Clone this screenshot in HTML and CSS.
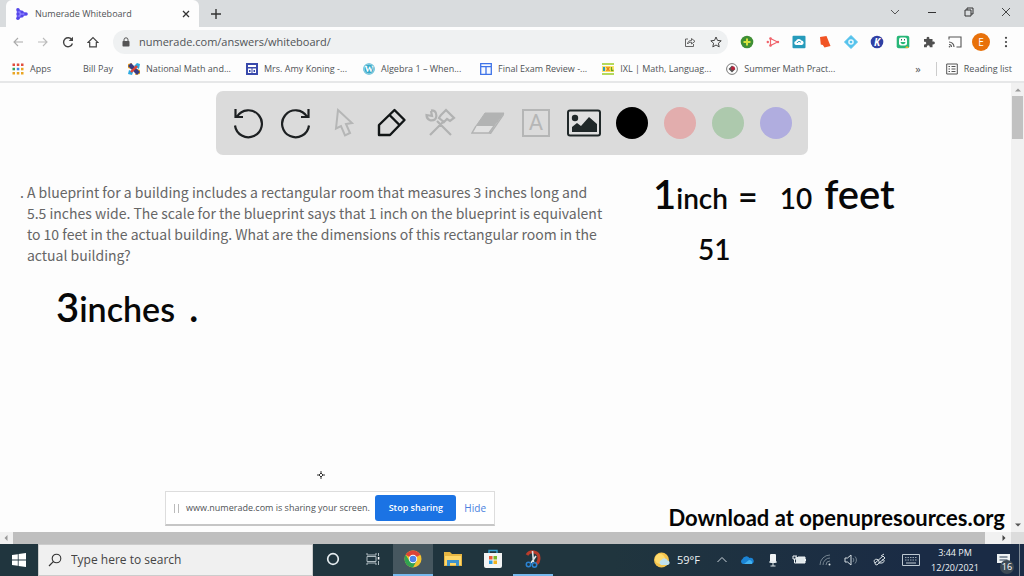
FILE: index.html
```
<!DOCTYPE html>
<html lang="en">
<head>
<meta charset="utf-8">
<meta name="viewport" content="width=device-width, initial-scale=1">
<title>Numerade Whiteboard</title>
<link rel="stylesheet" href="styles.css">
</head>
<body>
<header class="browser">
  <div class="tabstrip">
    <div class="tab">
      <svg class="i12" viewBox="0 0 12 12"><path d="M1.500 1.500L10.500 6L1.500 10.500Z" fill="#8d83ff" stroke="#6a5cf5" stroke-width="1.500"/><g fill="#5546e8"><circle cx="2" cy="1.800" r="1.700"/><circle cx="2" cy="6" r="1.600"/><circle cx="2" cy="10.200" r="1.700"/><circle cx="6" cy="4" r="1.500"/><circle cx="6" cy="8" r="1.500"/><circle cx="10" cy="6" r="1.700"/></g></svg>
      <span class="tab-title">Numerade Whiteboard</span>
      <button class="plain" aria-label="Close tab"><svg class="i8" viewBox="0 0 8 8"><path d="M1 1L7 7M7 1L1 7" stroke="#333" stroke-width="1.300"/></svg></button>
    </div>
    <button class="plain newtab" aria-label="New tab"><svg class="i12" viewBox="0 0 12 12"><path d="M6 1V11M1 6H11" stroke="#333" stroke-width="1.400"/></svg></button>
    <div class="window-controls">
      <button class="plain" aria-label="Search tabs"><svg class="i12" viewBox="0 0 12 12"><path d="M2 4L6 8L10 4" fill="none" stroke="#555"/></svg></button>
      <button class="plain" aria-label="Minimize"><svg class="i12" viewBox="0 0 12 12"><path d="M2 6.500H10" stroke="#333"/></svg></button>
      <button class="plain" aria-label="Restore"><svg class="i12" viewBox="0 0 12 12"><path d="M2 4H8V10H2ZM4 4V2H10V8H8" fill="none" stroke="#333"/></svg></button>
      <button class="plain" aria-label="Close"><svg class="i12" viewBox="0 0 12 12"><path d="M2 2L10 10M10 2L2 10" stroke="#333" stroke-width=".9"/></svg></button>
    </div>
  </div>
  <div class="toolbar">
    <nav class="nav">
      <button class="plain" aria-label="Back"><svg class="i12" viewBox="0 0 12 12"><path d="M11 6H2M6 2L2 6L6 10" fill="none" stroke="#aaa" stroke-width="1.100"/></svg></button>
      <button class="plain" aria-label="Forward"><svg class="i12" viewBox="0 0 12 12"><path d="M1 6H10M6 2L10 6L6 10" fill="none" stroke="#bbb" stroke-width="1.100"/></svg></button>
      <button class="plain" aria-label="Reload"><svg class="i12" viewBox="0 0 12 12"><path d="M10 4A4.500 4.500 0 1 0 10.400 7.500" fill="none" stroke="#444" stroke-width="1.400"/><path d="M11 .7V5H6.700Z" fill="#444"/></svg></button>
      <button class="plain" aria-label="Home"><svg class="i12" viewBox="0 0 12 12"><path d="M1 6.500L6 1.500L11 6.500H9.300V10.800H2.700V6.500Z" fill="none" stroke="#444" stroke-width="1.200"/></svg></button>
    </nav>
    <div class="omnibox">
      <svg class="i10" viewBox="0 0 10 10"><path d="M3 4V2.800A2 2 0 0 1 7 2.800V4" fill="none" stroke="#555"/><rect x="1.500" y="4" width="7" height="5.500" rx=".7" fill="#555"/></svg>
      <input class="url" type="text" aria-label="Address" value="numerade.com/answers/whiteboard/">
      <button class="plain" aria-label="Share"><svg class="i12" viewBox="0 0 12 12"><path d="M4 3H1.500V10.500H9.500V8M3.500 8C3.800 5.300 5.500 4.500 7.500 4.500V2.500L11 5.300L7.500 8V6.200C5.500 6.200 4.500 6.700 3.500 8Z" fill="none" stroke="#555" stroke-width=".9"/></svg></button>
      <button class="plain" aria-label="Bookmark"><svg class="i12" viewBox="0 0 12 12"><path d="M6 1L7.500 4.400L11.200 4.800L8.400 7.200L9.200 10.900L6 9L2.800 10.900L3.600 7.200L.8 4.800L4.500 4.400Z" fill="none" stroke="#444"/></svg></button>
    </div>
    <div class="extensions">
      <svg class="i14" viewBox="0 0 14 14"><circle cx="7" cy="7" r="6.300" fill="#3f8f35"/><path d="M7 3.500V10.500M3.500 7H10.500" stroke="#d6e33c" stroke-width="2"/></svg>
      <svg class="i14" viewBox="0 0 14 14"><path d="M4.500 3.500L11.500 7L4.500 10.500Z" fill="none" stroke="#f0636b" stroke-width="1.200"/><g fill="#f0636b"><circle cx="1.800" cy="7" r="1.200"/><circle cx="4.500" cy="3.500" r="1.300"/><circle cx="4.500" cy="10.500" r="1.300"/><circle cx="12" cy="7" r="1.200"/></g></svg>
      <svg class="i14" viewBox="0 0 14 14"><rect x=".5" y=".7" width="13" height="12.500" rx="1" fill="#269bbb"/><path d="M4.500 10A2 2 0 0 1 4 6A3 3 0 0 1 9.500 5.500A2.300 2.300 0 0 1 10 10Z" fill="#fff"/><path d="M5 8C6 6 8 6 9 7.500" fill="none" stroke="#269bbb"/></svg>
      <svg class="i14" viewBox="0 0 14 14"><path d="M2 2L8.500 1L12.500 11L6.500 12.500L4.800 10L2.800 9.500Z" fill="#f15424"/></svg>
      <svg class="i14" viewBox="0 0 14 14"><path d="M7 .5L13.500 7L7 13.500L.5 7Z" fill="#55c2ec" stroke="#55c2ec" stroke-linejoin="round"/><circle cx="7" cy="7" r="2.800" fill="#e8f8ff"/><circle cx="7" cy="7" r="1.300" fill="#55c2ec"/></svg>
      <svg class="i14" viewBox="0 0 14 14"><circle cx="7" cy="7" r="6.300" fill="#3040a4"/><text class="badge-k" x="7" y="10.500" text-anchor="middle">K</text></svg>
      <svg class="i14" viewBox="0 0 14 14"><rect x=".7" y=".7" width="12.600" height="12.600" rx="2" fill="#28b778"/><rect x="3" y="2.500" width="8" height="8" rx="2" fill="#fff"/><path d="M4.500 7H9.500C9 10 5 10 4.500 7" fill="#28b778"/><path d="M5.500 4V5.500M8.500 4V5.500" stroke="#28765a"/><path d="M9 13L11 11L13 13Z" fill="#f4b22c"/></svg>
      <svg class="i14" viewBox="0 0 14 14"><path d="M2 4H4.700C3.900 1 8.100 1 7.300 4H10.500V6.700C13.700 5.900 13.700 10 10.500 9.400V12.300H7.700C8.200 9.400 4.400 9.400 4.900 12.300H2V9.500C5 9.800 5 6.200 2 6.800Z" fill="#505050"/></svg>
      <svg class="i14" viewBox="0 0 14 14"><path d="M1 4.500V2H13V12H8.500M1 7A5 5 0 0 1 6 12M1 9.500A2.500 2.500 0 0 1 3.500 12" fill="none" stroke="#555" stroke-width="1.100"/><circle cx="1.500" cy="11.700" r=".8" fill="#555"/></svg>
      <button class="avatar" aria-label="Profile">E</button>
      <button class="plain" aria-label="Menu"><svg class="i12" viewBox="0 0 12 12"><g fill="#444"><circle cx="6" cy="1.800" r="1.100"/><circle cx="6" cy="6" r="1.100"/><circle cx="6" cy="10.200" r="1.100"/></g></svg></button>
    </div>
  </div>
  <nav class="bookmarks">
    <a href="#"><svg class="i12" viewBox="0 0 12 12"><g fill="#e14c3c"><rect width="2.500" height="2.500" x=".5" y=".5"/><rect width="2.500" height="2.500" x="4.800" y=".5"/><rect width="2.500" height="2.500" x="9" y=".5"/></g><g fill="#e9a523"><rect width="2.500" height="2.500" x=".5" y="9"/><rect width="2.500" height="2.500" x="4.800" y="9"/><rect width="2.500" height="2.500" x="9" y="9"/></g><rect x=".5" y="4.800" width="2.500" height="2.500" fill="#38a35a"/><rect x="4.800" y="4.800" width="2.500" height="2.500" fill="#4285e4"/><rect x="9" y="4.800" width="2.500" height="2.500" fill="#e9a523"/></svg>Apps</a>
    <a href="#" class="noicon">Bill Pay</a>
    <a href="#" class="site"><svg class="i12" viewBox="0 0 12 12"><path d="M0 1L4 0L3 6L0 5Z" fill="#f5a71b"/><path d="M9 6L12 7V11L7 12Z" fill="#f5a71b"/><path d="M6 3L9 0L12 1L11 6ZM1 7L5 9L4 12L0 11Z" fill="#2daae1"/><path d="M3 0L12 9L9 12L0 3Z" fill="#373b82"/><path d="M3 9L9 3" stroke="#e34335" stroke-width="2.400"/></svg>National Math and...</a>
    <a href="#" class="site"><svg class="i12" viewBox="0 0 12 12"><rect width="12" height="12" fill="#3949ab"/><path d="M2 2H10V4H2ZM2 5.500H5.500V10H2ZM6.500 5.500H10V10H6.500Z" fill="#fff"/><path d="M3 7H4.500V9H3ZM7.500 7H9V9H7.500Z" fill="#3949ab"/></svg>Mrs. Amy Koning -...</a>
    <a href="#" class="site"><svg class="i12" viewBox="0 0 12 12"><circle cx="6" cy="6" r="5.800" fill="#36a9ca"/><circle cx="6" cy="6" r="4.900" fill="none" stroke="#fff" stroke-width=".5"/><text class="badge-w" x="6" y="9" text-anchor="middle">W</text></svg>Algebra 1 – When...</a>
    <a href="#" class="site"><svg class="i12" viewBox="0 0 12 12"><path d="M.7 .7H11.300V11.300H.7ZM.7 3.700H11.300M6 3.700V11" fill="#f7faff" stroke="#3e73e8" stroke-width="1.300"/></svg>Final Exam Review -...</a>
    <a href="#" class="site"><svg class="i12" viewBox="0 0 12 12"><path d="M0 1H12M0 11H12" stroke="#9ccc27" stroke-width="1.500"/><rect y="3" width="12" height="6" fill="#ffe36a"/><path d="M2 4V8" stroke="#1690c8" stroke-width="1.800"/><path d="M4.500 4L7.500 8M7.500 4L4.500 8" stroke="#e68518" stroke-width="1.300"/><path d="M9.500 4V7.500H11.500" fill="none" stroke="#64a51b" stroke-width="1.300"/></svg>IXL | Math, Languag...</a>
    <a href="#" class="site"><svg class="i12" viewBox="0 0 12 12"><circle cx="6" cy="6" r="5.400" fill="#fff" stroke="#777"/><path d="M2.500 6L6 2.500L9.500 6L6 9.500Z" fill="#555"/><circle cx="7" cy="5.300" r="2" fill="#b4233c"/></svg>Summer Math Pract...</a>
    <button class="plain more" aria-label="More bookmarks">»</button>
    <button class="plain reading"><svg class="i12" viewBox="0 0 12 12"><path d="M.7 1H11.300V11H.7ZM2.500 3.500H4M5.500 3.500H9.500M2.500 6H4M5.500 6H9.500M2.500 8.500H4M5.500 8.500H9.500" fill="none" stroke="#555"/></svg>Reading list</button>
  </nav>
</header>

<main class="viewport">
  <section class="board">
    <div class="tools" role="toolbar" aria-label="Whiteboard tools">
      <button class="plain" aria-label="Undo"><svg class="i32" viewBox="0 0 32 32"><path d="M3 18.500A13.500 13.500 0 1 0 5 9.500M3.500 2V10H11" fill="none" stroke="#1d2022" stroke-width="2.200"/></svg></button>
      <button class="plain" aria-label="Redo"><svg class="i32" viewBox="0 0 32 32"><path d="M29 18.500A13.500 13.500 0 1 1 27 9.500M28.500 2V10H21" fill="none" stroke="#1d2022" stroke-width="2.200"/></svg></button>
      <button class="plain" aria-label="Select"><svg class="i32" viewBox="0 0 32 32"><path d="M10 3L24 16L18 17L22 26L17 28.500L13 19L8 21.500Z" fill="none" stroke="#b5b6b6" stroke-width="2"/></svg></button>
      <button class="plain" aria-label="Pen"><svg class="i32" viewBox="0 0 32 32"><path d="M3 28V18L18.500 3L28.500 13L14 28ZM13.500 8L23.500 18" fill="none" stroke="#111516" stroke-width="2.400" stroke-linejoin="round"/></svg></button>
      <button class="plain" aria-label="Tools"><svg class="i32" viewBox="0 0 32 32"><path d="M6 28L19 15M13 14L27 28M7 3.500C12 3 13.500 7.500 11.500 12M7 4L8 9L2.500 8C2.500 13 7.500 15 11.500 12M17 8L22 3L30 11L26 14L23 12L20 15L15 11Z" fill="none" stroke="#b1b2b2" stroke-width="2.200"/></svg></button>
      <button class="plain" aria-label="Eraser"><svg class="i34" viewBox="0 0 34 34"><path d="M14 7H33L23 20H5Z" fill="#b2b3b3" stroke="#b2b3b3"/><path d="M5 20L1 27H18L23 20" fill="#e1e1e1" stroke="#b2b3b3" stroke-width="1.500"/><path d="M33 7V9L20 28H18" fill="#b2b3b3"/></svg></button>
      <button class="plain" aria-label="Text"><span class="text-tool">A</span></button>
      <button class="plain" aria-label="Image"><svg class="i34" viewBox="0 0 34 34"><rect x="1" y="4.500" width="32" height="25" rx="2" fill="#e0e0e0" stroke="#202829" stroke-width="2"/><circle cx="8" cy="12" r="3.200" fill="#202829"/><path d="M5 26V21L10 17L14 20L22 11L30 18V26Z" fill="#202829"/></svg></button>
      <button class="plain" aria-label="Black"><span class="swatch black"></span></button>
      <button class="plain" aria-label="Red"><span class="swatch red"></span></button>
      <button class="plain" aria-label="Green"><span class="swatch green"></span></button>
      <button class="plain" aria-label="Blue"><span class="swatch blue"></span></button>
    </div>
    <div class="question"><span>.</span><p>A blueprint for a building includes a rectangular room that measures 3 inches long and 5.5 inches wide. The scale for the blueprint says that 1 inch on the blueprint is equivalent to 10 feet in the actual building. What are the dimensions of this rectangular room in the actual building?</p></div>
    <div class="ink note-scale"><span class="tall">1</span><span>inch</span><span class="equals">=</span><span class="ten">10</span><span class="wide">feet</span></div>
    <div class="ink note-five"><span>51</span></div>
    <div class="ink note-three"><span class="tall">3</span><span class="wide-word">inches</span><span class="dot">.</span></div>
    <svg class="cursor" viewBox="0 0 8 8"><path d="M4 0V2M4 6V8M0 4H2M6 4H8M4 2L6 4L4 6L2 4Z" fill="none" stroke="#333"/></svg>
    <div class="share" role="status">
      <span class="grip"></span><span class="share-text">www.numerade.com is sharing your screen.</span>
      <button class="stop">Stop sharing</button><a class="hide" href="#">Hide</a>
    </div>
    <p class="watermark">Download at openupresources.org</p>
  </section>
  <div class="scroll-y">
    <svg class="i8" viewBox="0 0 8 8"><path d="M1 5.500L4 2.500L7 5.500Z" fill="#999"/></svg>
    <span class="thumb-y"></span>
    <svg class="i8 end" viewBox="0 0 8 8"><path d="M1 2.500L4 5.500L7 2.500Z" fill="#555"/></svg>
  </div>
</main>
<div class="scroll-x">
  <svg class="i8" viewBox="0 0 8 8"><path d="M5.500 1L2.500 4L5.500 7Z" fill="#999"/></svg>
  <span class="thumb-x"></span>
  <svg class="i8" viewBox="0 0 8 8"><path d="M2.500 1L5.500 4L2.500 7Z" fill="#444"/></svg>
  <span class="corner"></span>
</div>

<footer class="taskbar">
  <button class="plain start" aria-label="Start"><svg class="i14" viewBox="0 0 14 14"><path d="M0 2L5.800 1.200V6.600H0ZM6.600 1.100L14 0V6.600H6.600ZM0 7.400H5.800V12.800L0 12ZM6.600 7.400H14V14L6.600 12.900Z" fill="#fff"/></svg></button>
  <label class="search"><svg class="i14" viewBox="0 0 14 14"><circle cx="8.500" cy="5.500" r="4.300" fill="none" stroke="#333" stroke-width="1.100"/><path d="M5.300 8.700L1 13" stroke="#333" stroke-width="1.200"/></svg><input type="text" placeholder="Type here to search" aria-label="Search"></label>
  <div class="apps">
    <button class="plain" aria-label="Cortana"><svg class="i14" viewBox="0 0 14 14"><circle cx="7" cy="7" r="5.300" fill="none" stroke="#e6edf0" stroke-width="1.700"/></svg></button>
    <button class="plain" aria-label="Task view"><svg class="i14" viewBox="0 0 14 14"><path d="M1 1V3H10V1M1 13V11H10V13M1 4.500H10V9.500H1ZM12.500 1V4M12.500 9V13" fill="none" stroke="#aebbc0"/><rect x="11.800" y="5" width="1.600" height="2.500" fill="#fff"/></svg></button>
    <button class="plain current" aria-label="Chrome"><svg class="i18" viewBox="0 0 18 18"><circle cx="9" cy="9" r="8.500" fill="#f2c230"/><path d="M9 9L1.640 4.750A8.500 8.500 0 0 1 16.360 4.750Z" fill="#db4437"/><path d="M1.640 4.750A8.500 8.500 0 0 0 9 17.500L12.500 11L5.500 11Z" fill="#31a350"/><circle cx="9" cy="9" r="4.200" fill="#fff"/><circle cx="9" cy="9" r="3.300" fill="#4d83e8"/></svg></button>
    <button class="plain" aria-label="File Explorer"><svg class="i18" viewBox="0 0 18 18"><path d="M0 2H6L8 4H18V16H0Z" fill="#e7b642"/><path d="M1 6H17V15H1Z" fill="#ffd869"/><path d="M3 16V10H15V16H12V13H6V16Z" fill="#3f93cb"/></svg></button>
    <button class="plain" aria-label="Store"><svg class="i20" viewBox="0 0 20 20"><path d="M6 5V1.500H14V5" fill="none" stroke="#36a2d0" stroke-width="1.400"/><path d="M1 4H19V17Q19 19 17 19H3Q1 19 1 17Z" fill="#f2f4f4"/><path d="M6 7H9.500V10.500H6Z" fill="#eb5736"/><path d="M10.500 7H14V10.500H10.500Z" fill="#78b72a"/><path d="M6 11.500H9.500V15H6Z" fill="#2b9ee2"/><path d="M10.500 11.500H14V15H10.500Z" fill="#f2b31d"/></svg></button>
    <button class="plain open" aria-label="Snipping Tool"><svg class="i18" viewBox="0 0 18 18"><path d="M3 5C6 0 15 1 15 8C15 11 14 13 12 14" fill="none" stroke="#b93c2b" stroke-width="3"/><path d="M8.500 1L9.500 12M12 6L7 13" stroke="#dfe5e8" stroke-width="1.600"/><g fill="none" stroke="#2c83d2" stroke-width="1.500"><circle cx="4.500" cy="14.500" r="2.200"/><circle cx="10.500" cy="15" r="2.200"/></g></svg></button>
  </div>
  <div class="tray">
    <svg class="i18" viewBox="0 0 18 18"><circle cx="8.500" cy="9" r="7.500" fill="#f5c44c"/><circle cx="7" cy="8" r="5" fill="#ffdc70"/><path d="M8 14A2.700 2.700 0 0 1 8.500 9A3.300 3.300 0 0 1 14.500 9.500A2.300 2.300 0 0 1 15 14Z" fill="#bfe0ee"/></svg>
    <span class="temp">59°F</span>
    <svg class="i12 chev" viewBox="0 0 12 12"><path d="M1.500 8L6 3.500L10.500 8" fill="none" stroke="#cdd6dc"/></svg>
    <svg class="i14" viewBox="0 0 14 14"><path d="M3 11A2.700 2.700 0 0 1 2.500 6A4 4 0 0 1 9.500 5A3 3 0 0 1 11.500 11Z" fill="#1b84d5"/><path d="M4 11L9 7A3 3 0 0 1 12 11Z" fill="#43b2f0"/></svg>
    <svg class="i14" viewBox="0 0 14 14"><rect x="4" y="1" width="6" height="9" rx="1" fill="#f1f4f5"/><path d="M3 9H11M7 10V13M4.500 13H9.500" stroke="#dce4e7"/></svg>
    <svg class="i14" viewBox="0 0 14 14"><rect x="4" y="4" width="9" height="6" fill="#dfe7ea"/><path d="M13.500 6V8M1 3V6H4V3M1 3H5M2.500 6V10H13V4H6" fill="none" stroke="#eef2f4"/></svg>
    <svg class="i14" viewBox="0 0 14 14"><path d="M2 12A10 10 0 0 1 12 2M5 12A7 7 0 0 1 12 5M8 12A4 4 0 0 1 12 8" fill="none" stroke="#74838f"/><circle cx="11.500" cy="11.500" r="1" fill="#dce4e7"/></svg>
    <svg class="i14" viewBox="0 0 14 14"><path d="M1 5H3.500L7 2V12L3.500 9H1Z" fill="none" stroke="#d5dee3"/><path d="M9 5A3 3 0 0 1 9 9M11 3.500A5 5 0 0 1 11 10.500" fill="none" stroke="#71818f"/></svg>
    <svg class="i14 pen" viewBox="0 0 14 14"><path d="M2 10C-1 6 5 5 6 8S2 14 2 10L10 3L12 5L6 10H9C12 9 12 6 9 7M8 3L11 1" fill="none" stroke="#dae2e6"/></svg>
    <svg class="key" viewBox="0 0 18 12"><path d="M.5 .5H17.500V11.500H.5ZM4 9H14" fill="none" stroke="#bec9d2"/><path d="M3 3.500H15M3 6H15" stroke="#9aa8b4" stroke-dasharray="1.500 1"/></svg>
    <div class="clock"><span>3:44 PM</span><span>12/20/2021</span></div>
    <button class="plain notice" aria-label="Notifications"><svg class="i14" viewBox="0 0 14 14"><path d="M0 1H13V10H6L4 13V10H0Z" fill="#eef2f4"/><path d="M2.500 4H10.500M2.500 7H10.500" stroke="#263a52"/></svg><span class="count">16</span></button>
  </div>
</footer>
</body>
</html>
```
FILE: styles.css
```
* { box-sizing: border-box; }
body {
  margin: 0;
  height: 100vh;
  display: flex;
  flex-direction: column;
  overflow: hidden;
  font: 9px/14px "Open Sans", "Noto Sans", sans-serif;
  color: #505356;
  background: #fdfdfd;
}
svg { display: block; flex: none; }
a { color: inherit; text-decoration: none; }
.plain {
  border: 0;
  padding: 0;
  background: none;
  font: inherit;
  color: inherit;
  display: flex;
  align-items: center;
  justify-content: center;
}
.i8 { width: 8px; height: 8px; }
.i10 { width: 10px; height: 10px; }
.i12 { width: 12px; height: 12px; }
.i14 { width: 14px; height: 14px; }
.i18 { width: 18px; height: 18px; }
.i20 { width: 20px; height: 20px; }
.i32 { width: 32px; height: 32px; }
.i34 { width: 34px; height: 34px; }

.browser { flex: none; border-bottom: 2px solid #e6e7e8; }
.tabstrip { display: flex; height: 27px; background: #d9dcde; }
.tab {
  display: flex;
  align-items: center;
  gap: 7px;
  width: 193px;
  margin-left: 6px;
  padding: 0 9px 0 10px;
  border-radius: 6px 6px 0 0;
  background: #fdfdfd;
}
.tab-title { flex: 1; white-space: nowrap; }
.newtab { width: 34px; }
.window-controls { display: flex; gap: 25px; margin-left: auto; padding: 0 12px 4px 0; align-items: center; }
.toolbar { display: flex; align-items: center; height: 29px; padding: 0 12px; }
.nav { display: flex; gap: 13px; width: 101px; }
.omnibox {
  flex: 1;
  display: flex;
  align-items: center;
  gap: 8px;
  height: 24px;
  padding: 0 6px 0 8px;
  border-radius: 12px;
  background: #eff1f2;
}
.omnibox .plain { margin-left: 6px; }
.url { flex: 1; min-width: 0; border: 0; padding: 0; background: none; font: 11px/16px "Open Sans", sans-serif; color: #505356; }
.extensions { display: flex; align-items: center; gap: 12px; margin-left: 12px; }
.avatar { width: 18px; height: 18px; margin: 0 -2px; border: 0; border-radius: 50%; padding: 0; background: #e8710a; color: #fff; font: 10px/18px "Open Sans", sans-serif; }
.extensions .plain { width: 12px; }
.badge-k { font: italic bold 10px "Open Sans", sans-serif; fill: #fff; }
.badge-w { font: bold 9px "Liberation Serif", serif; fill: #fff; }
.bookmarks { display: flex; align-items: center; height: 25px; padding: 0 12px; gap: 15px; white-space: nowrap; }
.bookmarks a, .reading { display: flex; align-items: center; gap: 6px; }
.bookmarks .noicon { padding-left: 17px; }
.bookmarks .site { min-width: 102px; }
.more { margin-left: auto; font-size: 11px; }
.bookmarks .reading { border-left: 1px solid #ccc; padding-left: 9px; }

.viewport { flex: 1; min-height: 0; display: flex; }
.board { flex: 1; min-width: 0; position: relative; padding: 8px 0 0 13px; }
.tools {
  display: flex;
  width: max-content;
  margin: 0 auto;
  padding: 8px;
  border-radius: 7px;
  background: #dbdbdb;
}
.tools .plain { width: 48px; height: 48px; }
.text-tool {
  width: 28px;
  height: 28px;
  border: 2px solid #b5b6b6;
  color: #b5b6b6;
  font: 22px/24px Roboto, sans-serif;
}
.swatch { width: 32px; height: 32px; border-radius: 50%; }
.black { background: #000; }
.red { background: #e2adad; }
.green { background: #adc9ad; }
.blue { background: #b0addf; }
.question {
  display: flex;
  gap: 3px;
  max-width: 588px;
  margin: 27px 0 0 7px;
  font: 14px/21px "Noto Sans CJK SC", sans-serif;
  color: #666;
}
.question p { margin: 0; }
.ink {
  position: absolute;
  display: flex;
  align-items: baseline;
  font: 600 28px/40px Lato, "Open Sans", sans-serif;
  color: #080808;
}
.tall { font-size: 40px; }
.note-scale { left: 653px; top: 91px; }
.equals { margin-left: 10px; font-size: 34px; }
.ten { margin-left: 22px; }
.wide { margin-left: 12px; font-size: 40px; }
.note-five { left: 698px; top: 146px; }
.note-three { left: 56px; top: 204px; }
.wide-word { font-size: 34px; }
.dot { margin-left: 14px; font-size: 40px; }
.cursor { position: absolute; left: 317px; bottom: 53px; width: 8px; height: 8px; }
.share {
  position: absolute;
  left: 165px;
  bottom: 6px;
  width: 330px;
  height: 35px;
  display: flex;
  align-items: center;
  padding: 0 8px;
  border: 1px solid #ddd;
  border-bottom: 2px solid #c6c6c6;
  background: #fff;
  white-space: nowrap;
}
.grip { width: 5px; height: 9px; border: solid #bbb; border-width: 0 1px; margin-right: 7px; }
.share-text { flex: 1; }
.stop { flex: none; width: 81px; height: 26px; border: 0; border-radius: 3px; padding: 0; background: #1b73e4; color: #fff; font: 600 9px/14px "Open Sans", sans-serif; }
.hide { margin-left: 8px; color: #4a7fe0; font-size: 10px; }
.watermark { position: absolute; right: 6px; bottom: 0; margin: 0; font: bold 22px/28px Lato, sans-serif; color: #050505; }
.scroll-y { flex: none; width: 13px; display: flex; flex-direction: column; align-items: center; padding: 3px 0; background: #f1f1f1; }
.thumb-y { width: 11px; height: 43px; margin-top: 2px; background: #c1c1c1; }
.end { margin-top: auto; }
.scroll-x { flex: none; display: flex; align-items: center; gap: 3px; height: 12px; padding-left: 2px; background: #f1f1f1; }
.thumb-x { flex: 1; height: 12px; background: #bfbfbf; margin-right: 12px; }
.corner { width: 13px; height: 12px; background: #dcdcdc; }

.taskbar { flex: none; display: flex; height: 32px; background: linear-gradient(90deg, #20353e 60%, #1a2b45 90%); color: #f0f3f5; }
.start { width: 38px; }
.search { width: 275px; display: flex; align-items: center; gap: 9px; padding: 0 9px; background: #f0f0f0; border: 1px solid #ccc; }
.search input { flex: 1; min-width: 0; border: 0; padding: 0; background: none; font: 12px/16px "Open Sans", sans-serif; }
.search input::placeholder { color: #444; opacity: 1; }
.apps { display: flex; }
.apps .plain { width: 40px; border-bottom: 2px solid transparent; }
.apps .current { background: #46575f; border-color: #76b9ed; }
.apps .open { border-color: #76b9ed; }
.tray { display: flex; align-items: center; gap: 12px; margin-left: auto; padding-right: 4px; white-space: nowrap; }
.temp { margin-left: -6px; font-size: 11px; }
.chev { margin-left: 4px; }
.pen { margin-left: 3px; }
.key { width: 18px; height: 12px; margin-left: 3px; }
.clock { display: flex; flex-direction: column; align-items: center; line-height: 15px; width: 50px; margin-left: -2px; }
.notice { position: relative; width: 28px; height: 32px; padding-right: 4px; border-right: 1px solid #7d8994; }
.count { position: absolute; right: 5px; bottom: 2px; width: 14px; height: 14px; border-radius: 50%; background: #3d4a55; color: #fff; line-height: 14px; }
```
